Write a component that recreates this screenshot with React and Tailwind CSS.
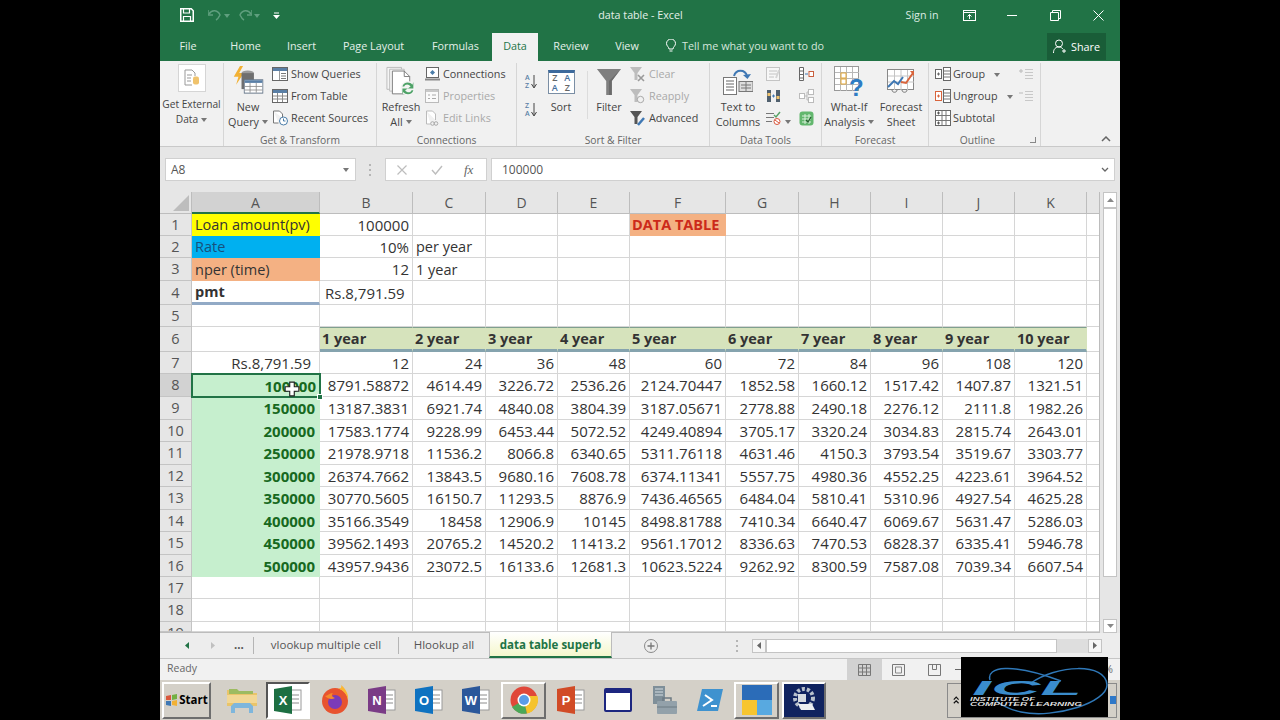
import React from 'react';

const Caret = ({ className = 'text-[#777]' }) => (
  <svg width="6" height="4" viewBox="0 0 6 4" className={`inline-block ${className}`}><path d="M0 0h6L3 4z" fill="currentColor" /></svg>
);

const Dots = () => (
  <svg width="3" height="13" viewBox="0 0 3 13"><path d="M0 1h2v2H0zM0 6h2v2H0zM0 11h2v2H0z" fill="#b5b5b5" /></svg>
);

const TableIcon = () => (
  <svg width="16" height="14" viewBox="0 0 16 14"><rect x=".5" y=".5" width="15" height="13" fill="#fff" stroke="#666" /><rect x="1" y="1" width="14" height="3" fill="#5a7fa6" /><path d="M1 7h14M1 10h14M5.500 4v9M10.500 4v9" stroke="#888" /></svg>
);
const QueriesIcon = () => (
  <svg width="16" height="14" viewBox="0 0 16 14"><rect x=".5" y=".5" width="15" height="13" fill="#fff" stroke="#666" /><rect x="1" y="1" width="14" height="3" fill="#5a7fa6" /><path d="M9 6.500h5M9 9h5M9 11.500h5" stroke="#777" /><path d="M7.500 4v9" stroke="#999" /></svg>
);
const RecentIcon = () => (
  <svg width="17" height="16" viewBox="0 0 17 16"><path d="M1.500 1h6l3 3v4M1.500 1v12h5" fill="#fff" stroke="#777" /><circle cx="11.500" cy="11" r="4" fill="#fff" stroke="#4a7ca8" /><path d="M11.500 8.500V11h2" fill="none" stroke="#4a7ca8" /></svg>
);
const ConnectionsIcon = () => (
  <svg width="15" height="14" viewBox="0 0 15 14"><rect x="1.500" y=".5" width="12" height="10" fill="#fff" stroke="#666" /><path d="M7.500 3l2.500 2.500-2.500 2.500L5 5.500z" fill="#4a7ca8" /><path d="M0 12.500h15" stroke="#888" strokeWidth="2" /></svg>
);
const PropertiesIcon = () => (
  <svg width="14" height="14" viewBox="0 0 14 14"><rect x=".5" y=".5" width="13" height="13" fill="#fafafa" stroke="#bbb" /><rect x="1" y="1" width="12" height="2" fill="#c9c9c9" /><path d="M3 6h2M3 9.500h2M7 6h4M7 9.500h4" stroke="#aaa" /></svg>
);
const EditLinksIcon = () => (
  <svg width="14" height="16" viewBox="0 0 14 16"><path d="M1.500 1h6l3 3v6M1.500 1v13h4" fill="#fff" stroke="#bbb" /><circle cx="7.500" cy="13.500" r="1.800" fill="none" stroke="#aaa" /><circle cx="11" cy="13.500" r="1.800" fill="none" stroke="#aaa" /></svg>
);
const SortAZ = ({ flip }) => (
  <div className="flex items-center w-[14px] h-[16px]">
    <div className="flex flex-col text-[7px] leading-[8px] font-semibold text-[#5a7fa6]">
      <span>{flip ? 'Z' : 'A'}</span>
      <span>{flip ? 'A' : 'Z'}</span>
    </div>
    <svg className="ml-[1px]" width="6" height="14" viewBox="0 0 6 14"><path d="M3 0v12M.5 9L3 13l2.500-4" fill="none" stroke="#444" /></svg>
  </div>
);
const SortBig = () => (
  <div className="w-[27px] h-[24px] border border-[#7a8ea4] border-t-[3px] border-t-[#3d6a9c] bg-white grid grid-cols-2 text-[9px] leading-[10px] text-center font-semibold text-[#47709c]">
    <span className="text-[#666]">Z</span><span>A</span><span>A</span><span className="text-[#666]">Z</span>
  </div>
);
const FunnelBig = () => (
  <svg width="26" height="26" viewBox="0 0 26 28"><path d="M0 0h26L16 13v15h-6V13z" fill="#7f7f7f" /><path d="M13 13v15h3V13l8-11z" fill="#6b6b6b" /></svg>
);
const FunnelSmall = ({ tone, mark }) => (
  <svg width="16" height="15" viewBox="0 0 16 15">
    <path d="M0 0h12L7.500 6v7h-3V6z" fill={tone} />
    {mark === 'x' && <path d="M8 8l6 6M14 8l-6 6" stroke="#9a9a9a" strokeWidth="1.600" />}
    {mark === 'r' && <circle cx="10.500" cy="10.500" r="3.200" fill="none" stroke="#a8a8a8" />}
    {mark === 'a' && <path d="M8 14l6-7" stroke="#3f78b4" strokeWidth="2.500" />}
  </svg>
);
const DataBoxIcon = () => (
  <svg width="16" height="18" viewBox="0 0 16 18"><path d="M1 1h7l3 3v3" fill="#fff" stroke="#999" /><path d="M1 1v15h7" fill="none" stroke="#999" /><path d="M3 6h5M3 9h4M3 12h4" stroke="#999" /><rect x="9" y="7.500" width="6" height="8" rx="2" fill="#f0c36d" /></svg>
);
const NewQueryIcon = () => (
  <svg width="31" height="32" viewBox="0 0 40 36" preserveAspectRatio="none">
    <path d="M9 0L1 12h6l-3 9L14 8H8l5-8z" fill="#f2b134" />
    <ellipse cx="19" cy="8" rx="8" ry="3" fill="#9a9a9a" />
    <path d="M11 8v18h16V8" fill="#6f6f6f" />
    <rect x="14.500" y="15.500" width="24" height="15" fill="#fff" stroke="#5a6c80" />
    <rect x="15" y="16" width="23" height="3" fill="#5a7fa6" />
    <path d="M15 23h23M15 27h23M22 19v11M30 19v11" stroke="#8a8a8a" />
  </svg>
);
const RefreshIcon = () => (
  <svg width="31" height="32" viewBox="0 0 34 34">
    <path d="M1 1h16v24H1z" fill="#f5f5f5" stroke="#b9b9b9" />
    <path d="M4 3h16v24H4z" fill="#f5f5f5" stroke="#b9b9b9" />
    <path d="M7 5h13l6 6v19H7z" fill="#fff" stroke="#777" />
    <path d="M20 5v6h6" fill="none" stroke="#777" />
    <circle cx="24" cy="24" r="8" fill="#f4f4f4" />
    <path d="M18 22c1-5 8-6 11-2l1-3v7h-6l3-2c-2-3-6-3-7 0zM30 26c-1 5-8 6-11 2l-1 3v-7h6l-3 2c2 3 6 3 7 0z" fill="#4ea267" />
  </svg>
);
const TextColumnsIcon = () => (
  <svg width="30" height="28" viewBox="0 0 30 28">
    <path d="M11 8c2-7 11-7 13 0" fill="none" stroke="#3f78b4" strokeWidth="2" />
    <path d="M20 7l4.500 4L28 6z" fill="#3f78b4" />
    <rect x=".5" y="9.500" width="13" height="17" fill="#fff" stroke="#777" />
    <path d="M3 13h8M3 16h8M3 19h8M3 22h8" stroke="#666" />
    <rect x="16" y="13.500" width="14" height="10" fill="#ddd" stroke="#777" />
    <path d="M23 14v9M18 17h10M18 20h10" stroke="#777" />
  </svg>
);
const MiniTool = ({ kind }) => {
  if (kind === 'flash') return <svg width="15" height="14" viewBox="0 0 15 14"><rect x=".5" y=".5" width="13" height="13" fill="#f7f7f7" stroke="#c4c4c4" /><path d="M3 4h8M3 7h8M3 10h5" stroke="#c4c4c4" /><path d="M13 3l-3 8" stroke="#d5d5d5" strokeWidth="2" /></svg>;
  if (kind === 'dup') return <svg width="15" height="14" viewBox="0 0 15 14"><rect x="1" y="1" width="4" height="12" fill="#50606e" /><rect x="10" y="1" width="4" height="12" fill="#50606e" /><rect x="1.500" y="4" width="3" height="3" fill="#f0c36d" /><rect x="10.500" y="7" width="3" height="3" fill="#f0c36d" /><path d="M6 7h3M7.500 5.500v3" stroke="#3f78b4" /></svg>;
  if (kind === 'valid') return <svg width="16" height="14" viewBox="0 0 16 14"><path d="M0 2.500h8M0 6.500h8M0 10.500h6" stroke="#777" /><path d="M8 4l2 2 4-5" fill="none" stroke="#5aa469" strokeWidth="1.500" /><circle cx="11" cy="10.500" r="3" fill="#fff" stroke="#d9573c" /><path d="M9 9l4 3" stroke="#d9573c" /></svg>;
  if (kind === 'cons') return <svg width="15" height="14" viewBox="0 0 15 14"><path d="M.5.500h4v13h-4zM.5 4h4M.5 7.500h4M.5 11h4" fill="#fff" stroke="#666" /><path d="M6 7h3" stroke="#3f78b4" /><rect x="10" y="4.500" width="4.500" height="5" fill="#fff" stroke="#c9603f" /></svg>;
  if (kind === 'rel') return <svg width="15" height="14" viewBox="0 0 15 14"><rect x=".5" y="4.500" width="5" height="5" fill="#fff" stroke="#bbb" /><rect x="9.500" y=".5" width="5" height="5" fill="#fff" stroke="#bbb" /><rect x="9.500" y="8.500" width="5" height="5" fill="#fff" stroke="#bbb" /><path d="M6 7h2V3h1M8 7v4h1" fill="none" stroke="#bbb" /></svg>;
  return <svg width="15" height="15" viewBox="0 0 15 15"><rect x=".5" y=".5" width="14" height="14" rx="3" fill="#63b76e" /><path d="M3 5h9M3 8h9M3 11h9M6 3v10M10 3v10" stroke="#d8efd9" /><path d="M7 9l2 2 3-5" fill="none" stroke="#285f31" strokeWidth="1.300" /></svg>;
};
const WhatIfIcon = () => (
  <svg className="overflow-visible" width="30" height="32" viewBox="0 0 30 32">
    <rect x=".5" y=".5" width="24" height="24" fill="#fff" stroke="#999" />
    <path d="M1 6.500h24M1 12.500h24M1 18.500h24M6.500 1v24M12.500 1v24M18.500 1v24" stroke="#b8b8b8" />
    <rect x="7" y="7" width="5" height="5" fill="#fff" stroke="#e5a93b" /><rect x="7" y="13" width="5" height="5" fill="#fff" stroke="#e5a93b" />
    <text x="15" y="30" fontSize="24" fontWeight="700" fontFamily="Liberation Sans, sans-serif" fill="#2e7cc4">?</text>
  </svg>
);
const ForecastIcon = () => (
  <svg width="28" height="27" viewBox="0 0 28 25">
    <rect x=".5" y=".5" width="26" height="20" fill="#fff" stroke="#888" />
    <path d="M1 7h26M1 13h26M7.500 1v20M14 1v20M20.500 1v20" stroke="#c4c4c4" />
    <path d="M1 18l6-6 4 3 5-7" fill="none" stroke="#3f78b4" strokeWidth="2" />
    <path d="M14 13l5 1 7-10" fill="none" stroke="#d9643c" strokeWidth="2" />
    <path d="M23 2h4v5z" fill="#d9643c" />
    <path d="M5 21c0 3 5 3 5 0M15 21c0 3 5 3 5 0" fill="none" stroke="#777" />
  </svg>
);
const OutlineIcon = ({ accent }) => (
  <svg width="16" height="14" viewBox="0 0 16 14">
    <rect x=".5" y="2.500" width="6" height="9" fill="#fff" stroke={accent || '#666'} />
    <path d="M2 7h3M3.500 5.500v3" stroke={accent || '#666'} />
    <rect x="8.500" y=".5" width="7" height="13" fill="#fff" stroke="#666" />
    <path d="M8.500 4h7M8.500 7h7M8.500 10h7" stroke="#777" />
  </svg>
);
const SubtotalIcon = () => (
  <svg width="16" height="16" viewBox="0 0 16 16"><rect x=".5" y=".5" width="15" height="15" fill="#fff" stroke="#666" /><path d="M.5 5.500h15M.5 10.500h15M7 .5v15M11 .5v15" stroke="#777" /><path d="M2 3h3M3.500 1.500v3M2 13h3M3.500 11.500v3" stroke="#555" /></svg>
);
const IndentIcon = ({ plus }) => (
  <svg width="14" height="13" viewBox="0 0 14 13"><path d="M6 1.500h8M6 4.500h8M6 7.500h8M6 10.500h8" stroke="#c8c8c8" /><path d={plus ? 'M0 3h4M2 1v4' : 'M0 3h4'} stroke="#bbb" /></svg>
);

const Small = ({ icon, children, dim, caret, w = 'w-[20px]' }) => (
  <div className={`h-[22px] flex items-center whitespace-nowrap ${dim ? 'text-[#a9a9a9]' : 'text-[#444]'}`}>
    <span className={`${w} flex justify-start shrink-0`}>{icon}</span>
    <span>{children}</span>
    {caret}
  </div>
);

const Big = ({ icon, lines, caret, w, top = 'h-[33px]' }) => (
  <div className={`${w} shrink-0 flex flex-col items-center text-[#444] leading-[15px] pt-[2px]`}>
    <div className={`${top} flex items-center justify-center`}>{icon}</div>
    <span className="whitespace-nowrap mt-[1px]">{lines[0]}</span>
    <span className="whitespace-nowrap flex items-center gap-[3px]">{lines[1]}{caret && <Caret />}</span>
  </div>
);

const Group = ({ label, w, children, labelClass = '' }) => (
  <div className={`${w} shrink-0 h-full flex flex-col border-r border-[#d6d6d6] mb-[3px]`}>
    <div className="flex-1 flex min-h-0 overflow-visible">{children}</div>
    <div className={`h-[14px] text-center text-[10.300px] leading-[16px] text-[#666] ${labelClass}`}>{label}</div>
  </div>
);

const Ribbon = () => (
  <div className="h-[86px] bg-[#f1f1f1] border-b border-[#c9c9c9] flex pt-[2px] text-[10.800px]">
    <Group label="" w="w-[64px]">
      <div className="w-full flex flex-col items-center text-[#444] leading-[15px] text-[10.200px]">
        <div className="w-[28px] h-[28px] mt-[1px] bg-white border border-[#d5d5d5] flex items-center justify-center"><DataBoxIcon /></div>
        <span className="whitespace-nowrap mt-[5px]">Get External</span>
        <span className="flex items-center gap-[3px]">Data<Caret /></span>
      </div>
    </Group>
    <Group label="Get & Transform" w="w-[153px]">
      <Big w="w-[48px]" icon={<NewQueryIcon />} lines={['New', 'Query']} caret />
      <div className="flex flex-col">
        <Small w="w-[19px]" icon={<QueriesIcon />}>Show Queries</Small>
        <Small w="w-[19px]" icon={<TableIcon />}>From Table</Small>
        <Small w="w-[19px]" icon={<RecentIcon />}>Recent Sources</Small>
      </div>
    </Group>
    <Group label="Connections" w="w-[140px]">
      <Big w="w-[48px]" icon={<RefreshIcon />} lines={['Refresh', 'All']} caret />
      <div className="flex flex-col">
        <Small w="w-[18px]" icon={<ConnectionsIcon />}>Connections</Small>
        <Small dim w="w-[18px]" icon={<PropertiesIcon />}>Properties</Small>
        <Small dim w="w-[18px]" icon={<EditLinksIcon />}>Edit Links</Small>
      </div>
    </Group>
    <Group label="Sort & Filter" w="w-[193px]">
      <div className="w-[26px] pl-[8px] flex flex-col gap-[6px] pt-[8px]">
        <div className="h-[22px] flex items-center"><SortAZ /></div>
        <div className="h-[22px] flex items-center"><SortAZ flip /></div>
      </div>
      <Big w="w-[36px]" icon={<SortBig />} lines={['Sort', '']} />
      <div className="w-px h-[48px] bg-[#dcdcdc] mt-[8px] ml-[8px]" />
      <Big w="w-[42px]" icon={<FunnelBig />} lines={['Filter', '']} />
      <div className="flex flex-col">
        <Small dim w="w-[19px]" icon={<FunnelSmall tone="#bdbdbd" mark="x" />}>Clear</Small>
        <Small dim w="w-[19px]" icon={<FunnelSmall tone="#bdbdbd" mark="r" />}>Reapply</Small>
        <Small w="w-[19px]" icon={<FunnelSmall tone="#555" mark="a" />}>Advanced</Small>
      </div>
    </Group>
    <Group label="Data Tools" w="w-[112px]">
      <Big w="w-[56px]" icon={<TextColumnsIcon />} lines={['Text to', 'Columns']} />
      <div className="flex flex-col gap-[3px] pt-[4px]">
        <div className="h-[19px]"><MiniTool kind="flash" /></div>
        <div className="h-[19px]"><MiniTool kind="dup" /></div>
        <div className="h-[19px] flex items-start gap-[3px]"><MiniTool kind="valid" /><span className="mt-[5px] leading-none"><Caret /></span></div>
      </div>
      <div className="flex flex-col gap-[3px] pt-[4px] ml-[8px]">
        <div className="h-[19px]"><MiniTool kind="cons" /></div>
        <div className="h-[19px]"><MiniTool kind="rel" /></div>
        <div className="h-[19px]"><MiniTool kind="model" /></div>
      </div>
    </Group>
    <Group label="Forecast" w="w-[107px]">
      <Big w="w-[54px]" icon={<WhatIfIcon />} lines={['What-If', 'Analysis']} caret />
      <Big w="w-[50px]" icon={<ForecastIcon />} lines={['Forecast', 'Sheet']} />
    </Group>
    <Group label="Outline" w="w-[112px]" labelClass="pr-[14px]">
      <div className="flex flex-col pl-[6px] w-[90px]">
        <Small w="w-[18px]" icon={<OutlineIcon />} caret={<span className="ml-[9px] leading-none"><Caret /></span>}>Group</Small>
        <Small w="w-[18px]" icon={<OutlineIcon accent="#d9643c" />} caret={<span className="ml-[9px] leading-none"><Caret /></span>}>Ungroup</Small>
        <Small w="w-[18px]" icon={<SubtotalIcon />}>Subtotal</Small>
      </div>
      <div className="flex flex-col">
        <div className="h-[22px] flex items-center"><IndentIcon plus /></div>
        <div className="h-[22px] flex items-center"><IndentIcon /></div>
      </div>
    </Group>
    <div className="flex-1 flex items-end justify-end pr-[9px] pb-[4px] relative">
      <span className="absolute left-[-11px] bottom-[3px] w-[6px] h-[6px] border-r border-b border-[#888]" />
      <svg width="10" height="6" viewBox="0 0 10 6"><path d="M1 5l4-4 4 4" fill="none" stroke="#666" strokeWidth="1.500" /></svg>
    </div>
  </div>
);

const TITLE_TABS = [
  ['File', 'w-[56px]'], ['Home', 'w-[59px]'], ['Insert', 'w-[53px]'], ['Page Layout', 'w-[91px]'], ['Formulas', 'w-[73px]'],
];

const Header = () => (
  <>
    <div className="h-[33px] bg-[#217346] flex items-center pb-[3px] text-white text-[10.700px]">
      <div className="w-[437px] flex items-center pl-[20px] shrink-0">
        <svg width="14" height="14" viewBox="0 0 14 14"><path d="M.75.750h10.500l2 2v10.500H.75z" fill="none" stroke="#fff" strokeWidth="1.500" /><path d="M3.500 1v4h6V1M3.500 13V8.500h7V13" fill="none" stroke="#fff" strokeWidth="1.200" /></svg>
        <svg className="ml-[14px]" width="14" height="12" viewBox="0 0 14 12"><path d="M1 5c3-5 9-4 11 1-1 2-2 4-4 5" fill="none" stroke="#5f9f7e" strokeWidth="1.500" /><path d="M0 1v5h5" fill="none" stroke="#5f9f7e" strokeWidth="1.500" /></svg>
        <span className="ml-[2px] leading-none"><Caret className="text-[#5f9f7e]" /></span>
        <svg className="ml-[8px]" width="14" height="12" viewBox="0 0 14 12"><path d="M13 5C10 0 4 1 2 6c1 2 2 4 4 5" fill="none" stroke="#5f9f7e" strokeWidth="1.500" /><path d="M14 1v5H9" fill="none" stroke="#5f9f7e" strokeWidth="1.500" /></svg>
        <span className="ml-[2px] leading-none"><Caret className="text-[#5f9f7e]" /></span>
        <svg className="ml-[13px]" width="7" height="7" viewBox="0 0 7 7"><path d="M1 1h5" stroke="#fff" /><path d="M0 3h7L3.500 7z" fill="#fff" /></svg>
      </div>
      <span className="w-[87px] text-center whitespace-nowrap text-[#e4f0e9]">data table - Excel</span>
      <span className="ml-[220px] w-[36px] text-center whitespace-nowrap text-[#dcebe2]">Sign in</span>
      <svg className="ml-[23px]" width="13" height="11" viewBox="0 0 13 11"><rect x=".5" y=".5" width="12" height="10" fill="none" stroke="#fff" /><path d="M1 2.500h11" stroke="#fff" /><path d="M6.500 9V4.500M4.500 6.500l2-2 2 2" fill="none" stroke="#fff" /></svg>
      <div className="ml-[31px] w-[10px] h-px bg-white" />
      <svg className="ml-[33px]" width="11" height="11" viewBox="0 0 11 11"><path d="M.5 2.500h8v8h-8zM2.500 2.500v-2h8v8h-2" fill="none" stroke="#fff" /></svg>
      <svg className="ml-[32px]" width="11" height="11" viewBox="0 0 11 11"><path d="M.5.500l10 10M10.500.500l-10 10" stroke="#fff" /></svg>
    </div>
    <div className="h-[28px] bg-[#217346] flex text-[10.800px] text-[#e4f0e9] leading-[26px]">
      {TITLE_TABS.map(([t, w]) => (
        <div key={t} className={`${w} text-center shrink-0`}>{t}</div>
      ))}
      <div className="w-[46px] text-center bg-[#f1f1f1] text-[#217346] shrink-0">Data</div>
      <div className="w-[66px] text-center shrink-0">Review</div>
      <div className="w-[46px] text-center shrink-0">View</div>
      <div className="ml-[16px] w-[174px] flex items-center gap-[6px] text-[#d5e6dc] pb-[2px] whitespace-nowrap">
        <svg width="10" height="14" viewBox="0 0 10 14"><path d="M3 10c0-2-2.500-3-2.500-5.500a4.500 4.500 0 0 1 9 0C9.500 7 7 8 7 10zM3.500 12h3" fill="none" stroke="#fff" /></svg>
        <span>Tell me what you want to do</span>
      </div>
      <div className="ml-[207px] w-[59px] bg-[#195d38] flex items-center justify-center gap-[4px] text-white h-[27px]">
        <svg width="14" height="15" viewBox="0 0 14 15"><circle cx="6" cy="4.500" r="3.500" fill="none" stroke="#fff" /><path d="M.5 14c0-4 2-6 5.500-6 2 0 3 1 4 2M11 10v4M9 12h4" fill="none" stroke="#fff" /></svg>
        <span>Share</span>
      </div>
    </div>
    <Ribbon />
  </>
);

const FormulaBar = () => (
  <div className="h-[45px] bg-[#e6e6e6] flex pt-[11px] pl-[5px] pr-[5px] text-[12px] text-[#555]">
    <div className="w-[191px] h-[23px] bg-white border border-[#d0d0d0] flex items-center justify-between pl-[5px] pr-[6px]">
      <span>A8</span><Caret />
    </div>
    <div className="w-[29px] flex items-center justify-center h-[23px]"><Dots /></div>
    <div className="w-[102px] h-[23px] bg-white border border-[#d0d0d0] flex items-center pl-[11px]">
      <svg width="10" height="10" viewBox="0 0 10 10"><path d="M.5.500l9 9M9.500.500l-9 9" stroke="#bdbdbd" strokeWidth="1.200" /></svg>
      <svg className="ml-[24px]" width="12" height="10" viewBox="0 0 12 10"><path d="M1 5l3.500 4L11 1" fill="none" stroke="#bdbdbd" strokeWidth="1.400" /></svg>
      <span className="ml-[21px] font-['Liberation_Serif',serif] italic text-[#666] text-[13px]">fx</span>
    </div>
    <div className="ml-[4px] flex-1 h-[23px] bg-white border border-[#d0d0d0] flex items-center pl-[10px] pr-[5px] justify-between">
      <span>100000</span>
      <svg width="8" height="5" viewBox="0 0 8 5"><path d="M1 1l3 3 3-3" fill="none" stroke="#666" strokeWidth="1.300" /></svg>
    </div>
  </div>
);

const COLS = ['A', 'B', 'C', 'D', 'E', 'F', 'G', 'H', 'I', 'J', 'K', 'L'];
const ROW_NUMS = Array.from({ length: 19 }, (_, i) => i + 1);

const BODY = [
  ['100000', '8791.58872', '4614.49', '3226.72', '2536.26', '2124.70447', '1852.58', '1660.12', '1517.42', '1407.87', '1321.51'],
  ['150000', '13187.3831', '6921.74', '4840.08', '3804.39', '3187.05671', '2778.88', '2490.18', '2276.12', '2111.8', '1982.26'],
  ['200000', '17583.1774', '9228.99', '6453.44', '5072.52', '4249.40894', '3705.17', '3320.24', '3034.83', '2815.74', '2643.01'],
  ['250000', '21978.9718', '11536.2', '8066.8', '6340.65', '5311.76118', '4631.46', '4150.3', '3793.54', '3519.67', '3303.77'],
  ['300000', '26374.7662', '13843.5', '9680.16', '7608.78', '6374.11341', '5557.75', '4980.36', '4552.25', '4223.61', '3964.52'],
  ['350000', '30770.5605', '16150.7', '11293.5', '8876.9', '7436.46565', '6484.04', '5810.41', '5310.96', '4927.54', '4625.28'],
  ['400000', '35166.3549', '18458', '12906.9', '10145', '8498.81788', '7410.34', '6640.47', '6069.67', '5631.47', '5286.03'],
  ['450000', '39562.1493', '20765.2', '14520.2', '11413.2', '9561.17012', '8336.63', '7470.53', '6828.37', '6335.41', '5946.78'],
  ['500000', '43957.9436', '23072.5', '16133.6', '12681.3', '10623.5224', '9262.92', '8300.59', '7587.08', '7039.34', '6607.54'],
];
const YEARS = ['1 year', '2 year', '3 year', '4 year', '5 year', '6 year', '7 year', '8 year', '9 year', '10 year'];
const NPER = ['12', '24', '36', '48', '60', '72', '84', '96', '108', '120'];

const GRID = 'border-[#d6d6d6]';
const NUM = `justify-end pr-[3px] text-[15px] ${GRID}`;
const TXT = `pl-[3px] ${GRID}`;

function cellAt(r, c) {
  const i = COLS.indexOf(c);
  const key = c + r;
  const fixed = {
    A1: ['Loan amount(pv)', 'bg-[#ffff00] border-[#ffff00] pl-[3px]'],
    A2: ['Rate', 'bg-[#00b0f0] border-[#00b0f0] pl-[3px] text-[#17507c]'],
    A3: ['nper (time)', 'bg-[#f4b183] border-[#f4b183] pl-[3px]'],
    A4: ['pmt', 'pl-[3px] font-bold border-r-[#d6d6d6] border-b-[3px] border-b-[#92aac6]'],
    A7: ['Rs.8,791.59', `justify-end pr-[8px] text-[15px] ${GRID}`],
    B1: ['100000', NUM],
    B2: ['10%', NUM],
    B3: ['12', NUM],
    B4: ['Rs.8,791.59', `pl-[5px] text-[15px] ${GRID}`],
    C2: ['per year', TXT],
    C3: ['1 year', TXT],
    F1: ['DATA TABLE', 'bg-[#f4b183] border-[#f4b183] pl-[2px] font-bold text-[#cc2a1a]'],
  };
  if (fixed[key]) return fixed[key];
  if (r === 6 && i >= 1 && i <= 10) {
    return [YEARS[i - 1], 'pl-[2px] bg-[#d6e3bc] font-bold border-t border-t-[#7f9f8f] border-r-[#d6e3bc] border-b-[3px] border-b-[#85a3ae]'];
  }
  if (r === 7 && i >= 1 && i <= 10) return [NPER[i - 1], NUM];
  if (r >= 8 && r <= 16 && i <= 10) {
    if (i === 0) return [BODY[r - 8][0], 'justify-end pr-[4px] text-[15px] bg-[#c6efce] border-[#c6efce] font-bold text-[#17691f]'];
    return [BODY[r - 8][i], NUM];
  }
  return ['', GRID];
}

const Sheet = () => (
  <div className="h-[441px] flex bg-white text-[14.500px] text-[#333]">
    <div className="w-[940px] shrink-0 grid grid-cols-[32px_128px_93px_73px_72px_72px_96px_73px_72px_72px_72px_72px_13px] grid-rows-[22px_22px_22px_23px_24px_22px_25px_22px_23px_23px_22px_23px_22px_23px_22px_23px_22px_22px_23px_10px] overflow-hidden border-b border-r border-[#bcbcbc]">
      <div className="bg-[#e6e6e6] border-r border-b border-[#bdbdbd] flex items-end justify-end pr-[2px] pb-[2px]">
        <svg width="16" height="16" viewBox="0 0 16 16"><path d="M16 0v16H0z" fill="#bdbdbd" /></svg>
      </div>
      {COLS.map((c) => (
        <div key={c} className={`border-r flex items-center justify-center text-[#555] text-[14px] ${c === 'A' ? 'bg-[#d2d2d2] border-b-2 border-b-[#217346] border-r-[#bdbdbd]' : 'bg-[#e6e6e6] border-b border-[#bdbdbd]'}`}>{c === 'L' ? '' : c}</div>
      ))}
      {ROW_NUMS.map((r) => (
        <React.Fragment key={r}>
          <div className={`border-b border-r border-[#c4c4c4] flex justify-center text-[#555] overflow-hidden ${r === 19 ? 'items-start leading-[22px]' : 'items-center'} ${r === 8 ? 'bg-[#d2d2d2]' : 'bg-[#e6e6e6]'}`}>{r}</div>
          {COLS.map((c) => {
            const [t, cls] = cellAt(r, c);
            if (c + r === 'A8') {
              return (
                <div key={c} className="relative flex items-center justify-end pt-px pr-[4px] text-[15px] bg-[#c6efce] font-bold text-[#17691f] outline-2 -outline-offset-1 outline-[#217346] z-10">
                  {t}
                  <svg className="absolute left-[92px] top-[7px]" width="16" height="16" viewBox="0 0 14 14"><path d="M5 1h4v4h4v4H9v4H5V9H1V5h4z" fill="#fff" stroke="#222" /></svg>
                  <span className="absolute right-[-3px] bottom-[-3px] w-[6px] h-[6px] bg-[#217346] border border-white" />
                </div>
              );
            }
            return <div key={c} className={`flex items-center pt-px whitespace-nowrap overflow-hidden border-r border-b ${cls}`}>{t}</div>;
          })}
        </React.Fragment>
      ))}
    </div>
    <div className="flex-1 bg-[#e6e6e6] flex flex-col pl-[3px] pr-[3px]">
      <div className="h-[16px] bg-white border border-[#c4c4c4] flex items-center justify-center"><svg width="7" height="4" viewBox="0 0 7 4"><path d="M3.500 0L7 4H0z" fill="#888" /></svg></div>
      <div className="h-[369px] bg-white border border-[#c4c4c4]" />
      <div className="flex-1" />
      <div className="h-[14px] bg-white border border-[#c4c4c4] flex items-center justify-center"><svg width="7" height="4" viewBox="0 0 7 4"><path d="M0 0h7L3.500 4z" fill="#888" /></svg></div>
    </div>
  </div>
);

const TabBar = () => (
  <div className="h-[25px] bg-[#ededed] flex items-stretch text-[11.500px] text-[#555]">
    <div className="w-[94px] flex items-center relative shrink-0 border-r border-[#b5b5b5] my-[4px]">
      <svg className="ml-[25px]" width="4" height="7" viewBox="0 0 4 7"><path d="M4 0v7L0 3.500z" fill="#217346" /></svg>
      <svg className="ml-[22px]" width="4" height="7" viewBox="0 0 4 7"><path d="M0 0v7l4-3.500z" fill="#c0c0c0" /></svg>
      <span className="ml-[19px] font-bold pb-[2px]">...</span>
    </div>
    <div className="w-[145px] shrink-0 flex items-center justify-center border-r border-[#b5b5b5] my-[4px] pb-[2px]">vlookup multiple cell</div>
    <div className="w-[90px] shrink-0 flex items-center justify-center pb-[2px]">Hlookup all</div>
    <div className="w-[123px] shrink-0 bg-linear-to-b from-white to-[#f5f7cc] -mt-px pt-[1px] border-x border-[#bcbcbc] border-b-2 border-b-[#217346] flex items-center justify-center font-bold text-[#217346]">data table superb</div>
    <div className="ml-[31px] flex items-center">
      <svg width="16" height="16" viewBox="0 0 16 16"><circle cx="8" cy="8" r="6.500" fill="none" stroke="#8a8a8a" /><path d="M4.500 8h7M8 4.500v7" stroke="#777" strokeWidth="1.300" /></svg>
    </div>
    <div className="w-[14px] ml-[71px] flex items-center justify-center"><Dots /></div>
    <div className="ml-[8px] w-[350px] flex items-center">
      <div className="w-[14px] h-[14px] bg-[#f6f6f6] border border-[#c4c4c4] flex items-center justify-center"><svg width="4" height="7" viewBox="0 0 4 7"><path d="M4 0v7L0 3.500z" fill="#666" /></svg></div>
      <div className="w-[291px] h-[14px] bg-white border border-[#c4c4c4]" />
      <div className="flex-1 h-[14px] bg-[#dedede]" />
      <div className="w-[14px] h-[14px] bg-[#f6f6f6] border border-[#c4c4c4] flex items-center justify-center"><svg width="4" height="7" viewBox="0 0 4 7"><path d="M0 0v7l4-3.500z" fill="#666" /></svg></div>
    </div>
  </div>
);

const StatusBar = () => (
  <div className="h-[22px] bg-[#f1f1f1] border-t border-[#c6c6c6] flex items-center text-[10.500px] text-[#666]">
    <span className="ml-[7px] pb-px">Ready</span>
    <div className="ml-[650px] w-[35px] h-full bg-[#d2d2d2] flex items-center justify-center">
      <svg width="13" height="12" viewBox="0 0 13 12"><path d="M.5.500h12v11H.5zM.5 4h12M.5 8h12M4.500.5v11M8.500.5v11" fill="none" stroke="#777" /></svg>
    </div>
    <svg className="ml-[10px]" width="13" height="12" viewBox="0 0 13 12"><path d="M.5.500h12v11H.5z" fill="none" stroke="#777" /><path d="M3.500 3h6v6h-6z" fill="none" stroke="#888" /></svg>
    <svg className="ml-[23px]" width="13" height="12" viewBox="0 0 13 12"><path d="M.5.500h12v11H.5zM4.500.5v5h4V.5" fill="none" stroke="#777" /></svg>
    <div className="ml-[14px] w-[6px] h-px bg-[#666]" />
    <span className="ml-auto pr-[7px]">%</span>
  </div>
);

const TaskBtn = ({ state, children, w = 'w-[44px]' }) => (
  <div className={`${w} h-[37px] shrink-0 flex items-center justify-center ${state === 'in' ? 'bg-white border-2 border-t-[#555] border-l-[#555] border-r-white border-b-white' : state === 'out' ? 'border-2 border-t-white border-l-white border-r-[#6e6e6e] border-b-[#6e6e6e]' : ''}`}>{children}</div>
);

const Office = ({ bg, letter }) => (
  <svg width="30" height="30" viewBox="0 0 30 30">
    <rect x="14" y="5" width="14" height="20" fill="#fff" stroke="#9a9a9a" />
    <path d="M16 10h10M16 14h10M16 18h10" stroke="#8c8c8c" />
    <path d="M1 4l18-3v28L1 26z" fill={bg} />
    <text x="10" y="20" textAnchor="middle" fontSize="13" fontWeight="700" fontFamily="Liberation Sans, sans-serif" fill="#fff">{letter}</text>
  </svg>
);

const Taskbar = () => (
  <div className="h-[40px] bg-[#d4d0c8] flex items-center pl-[2px] gap-[3px]">
    <TaskBtn state="out" w="w-[49px]">
      <div className="flex items-center gap-[1px] font-bold text-[11.500px] text-black">
        <svg width="13" height="13" viewBox="0 0 13 13"><path d="M1 2l5-1v5H1z" fill="#d9573c" /><path d="M7 1l5-1v5l-5 1z" fill="#72b043" /><path d="M1 7h5v5l-5-1z" fill="#3f78b4" /><path d="M7 7l5-1v6l-5-1z" fill="#f2b134" /></svg>
        Start
      </div>
    </TaskBtn>
    <TaskBtn w="w-[49px]">
      <svg className="ml-[7px]" width="32" height="28" viewBox="0 0 32 28"><path d="M1 4h10l3 3h17v13H1z" fill="#e9c46a" /><path d="M3 3h8l2 2h14v3H3z" fill="#9dbb61" /><path d="M1 9h30v8H1z" fill="#f2d795" /><path d="M5 27v-7l3-3h16l3 3v7h-4v-5H9v5z" fill="#7eb6dc" /></svg>
    </TaskBtn>
    <TaskBtn state="in" w="w-[44px]"><Office bg="#1d6f42" letter="X" /></TaskBtn>
    <TaskBtn w="w-[44px]">
      <svg width="30" height="30" viewBox="0 0 30 30"><circle cx="15" cy="16" r="13" fill="#e8532f" /><path d="M15 3c6 0 12 5 13 12 1-6-3-12-7-15 1 3 0 4-6 3z" fill="#fbb531" /><circle cx="15" cy="17" r="7" fill="#7b3bb8" /><path d="M5 11c3 0 4-3 8-3-2 2-1 4 2 5-3 2-7 1-10-2z" fill="#f58a2c" /></svg>
    </TaskBtn>
    <TaskBtn w="w-[44px]"><Office bg="#7a3b86" letter="N" /></TaskBtn>
    <TaskBtn w="w-[44px]"><Office bg="#0f72c0" letter="O" /></TaskBtn>
    <TaskBtn w="w-[44px]"><Office bg="#2b579a" letter="W" /></TaskBtn>
    <TaskBtn state="out" w="w-[45px]">
      <svg width="28" height="28" viewBox="0 0 28 28"><circle cx="14" cy="14" r="13.500" fill="#e0483a" /><path d="M14 14L2 21A14 14 0 0 0 17 27.500z" fill="#4aa858" /><path d="M14 14l3 13.500A14 14 0 0 0 27.500 10H14z" fill="#f5c32c" /><circle cx="14" cy="14" r="6.500" fill="#fff" /><circle cx="14" cy="14" r="5" fill="#5a9ce8" /></svg>
    </TaskBtn>
    <TaskBtn w="w-[44px]"><Office bg="#d14b26" letter="P" /></TaskBtn>
    <TaskBtn w="w-[43px]">
      <svg width="28" height="24" viewBox="0 0 28 24"><rect x="1" y="1" width="26" height="22" rx="1" fill="#fff" stroke="#1d2680" strokeWidth="2" /><rect x="1" y="1" width="26" height="4" fill="#1d2680" /></svg>
    </TaskBtn>
    <TaskBtn w="w-[43px]">
      <svg width="28" height="30" viewBox="0 0 28 30"><rect x="3" y="1" width="12" height="18" fill="#7f8f99" /><path d="M5 4h8M5 7h8M5 10h8" stroke="#d6dde2" /><rect x="7" y="16" width="20" height="13" rx="1" fill="#93a1aa" /><path d="M13 16v-3h8v3" fill="none" stroke="#6d7a82" strokeWidth="1.500" /><path d="M7 22h20" stroke="#6d7a82" /></svg>
    </TaskBtn>
    <TaskBtn w="w-[43px]">
      <svg width="28" height="24" viewBox="0 0 28 24"><path d="M6 1h21l-5 22H1z" fill="#3f92cf" /><path d="M9 7l7 5-9 6" fill="none" stroke="#fff" strokeWidth="2" /><path d="M15 18h6" stroke="#fff" strokeWidth="2" /></svg>
    </TaskBtn>
    <TaskBtn state="out" w="w-[45px]">
      <div className="w-[30px] h-[30px] grid grid-cols-2 grid-rows-2">
        <div className="col-span-2 bg-[#2b6cb8]" />
        <div className="bg-[#f7c52e]" />
        <div className="bg-[#58a9e0]" />
      </div>
    </TaskBtn>
    <TaskBtn state="out" w="w-[44px]">
      <div className="w-[40px] h-[33px] bg-[#10235f] flex items-center justify-center">
        <svg width="28" height="28" viewBox="0 0 28 28"><circle cx="14" cy="12" r="9" fill="none" stroke="#b8c1cc" strokeWidth="4" strokeDasharray="3 2" /><rect x="8" y="8" width="8" height="8" fill="#d6dbe0" /><path d="M8 18h14l3 6H11z" fill="#eceff1" /></svg>
      </div>
    </TaskBtn>
    <div className="ml-[118px] w-[170px] h-[35px] border border-[#8a8a8a] flex items-center pl-[5px]">
      <svg width="8" height="10" viewBox="0 0 8 10"><path d="M1 4.500l3-3 3 3M1 9l3-3 3 3" fill="none" stroke="#111" strokeWidth="1.500" /></svg>
      <div className="ml-[151px] w-[7px] h-[8px] bg-[#2f78c8]" />
    </div>
  </div>
);

const Logo = () => (
  <div className="absolute left-[801px] top-[657px] w-[147px] h-[60px] bg-black">
    <svg width="147" height="60" viewBox="0 0 147 60">
      <path d="M29 23C25 10 50 5 100 24" fill="none" stroke="#2f78b8" strokeWidth="1.500" />
      <path d="M70 26C95 8 145 5 146 28C146 45 95 62 60 55C50 53 40 48 34 43" fill="none" stroke="#2f78b8" strokeWidth="1.500" />
      <text x="11" y="38" fontSize="21" fontWeight="700" fontStyle="italic" fontFamily="Liberation Sans, sans-serif" fill="#3a8ccc" textLength="110" lengthAdjust="spacingAndGlyphs">ICL</text>
      <text x="9" y="44" fontSize="4.500" fontWeight="700" fontStyle="italic" fontFamily="Liberation Sans, sans-serif" fill="#ddd" textLength="65" lengthAdjust="spacingAndGlyphs">INSTITUTE OF</text>
      <text x="9" y="48.500" fontSize="4.500" fontWeight="700" fontStyle="italic" fontFamily="Liberation Sans, sans-serif" fill="#ddd" textLength="112" lengthAdjust="spacingAndGlyphs">COMPUTER LEARNING</text>
    </svg>
  </div>
);

export default function App() {
  return (
    <div className="w-[1280px] h-[720px] bg-black flex justify-center overflow-hidden font-['Open_Sans',sans-serif]">
      <div className="w-[960px] h-[720px] relative flex flex-col">
        <Header />
        <FormulaBar />
        <Sheet />
        <TabBar />
        <StatusBar />
        <Taskbar />
        <Logo />
      </div>
    </div>
  );
}
